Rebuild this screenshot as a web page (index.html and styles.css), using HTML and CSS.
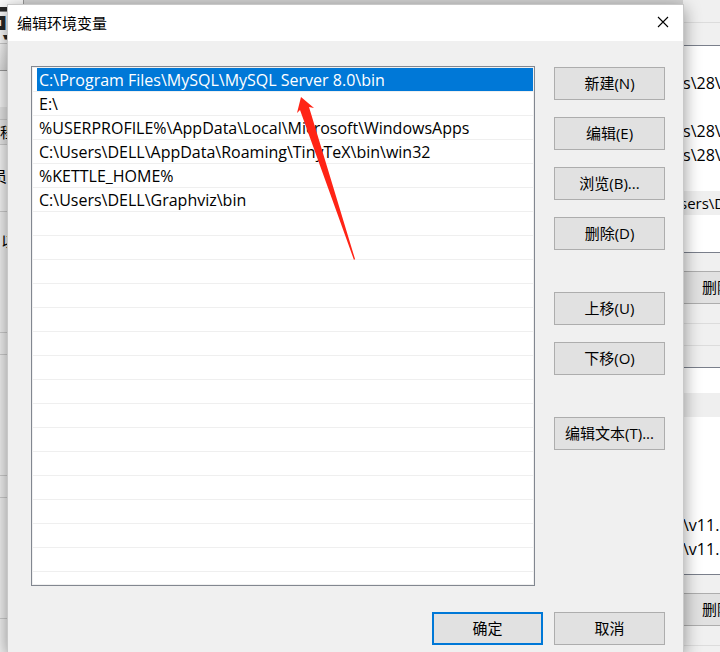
FILE: index.html
```html
<!DOCTYPE html>
<html lang="zh-CN">
<head>
<meta charset="utf-8">
<title>编辑环境变量</title>
<link rel="stylesheet" href="styles.css">
</head>
<body>
<div class="desktop">
  <div class="behind" aria-hidden="true">
    <div class="strip">
      <div class="block heading">可</div>
      <div class="block toolbar"></div>
      <div class="block space"></div>
      <div class="block tab">程</div>
      <div class="block member">员</div>
      <div class="block note">以</div>
      <div class="block short"></div>
      <div class="block tall"></div>
      <div class="block short"></div>
      <div class="block tall"></div>
    </div>
    <div class="caption"></div>
    <div class="parent">
      <div class="parent-title"></div>
      <div class="parent-gap"></div>
      <div class="vars">
        <div class="var"></div>
        <div class="var">s\28\</div>
        <div class="var"></div>
        <div class="var">s\28\</div>
        <div class="var">s\28\</div>
        <div class="var"></div>
        <div class="var current">sers\D</div>
      </div>
      <div class="parent-actions"><span class="parent-button">删除</span></div>
      <div class="group-edge"></div>
      <div class="parent-gap"></div>
      <div class="vars">
        <div class="var"></div>
        <div class="var current"></div>
        <div class="var"></div>
        <div class="var"></div>
        <div class="var"></div>
        <div class="var"></div>
        <div class="var">\v11.</div>
        <div class="var">\v11.</div>
      </div>
      <div class="parent-actions"><span class="parent-button">删除</span></div>
      <div class="group-edge"></div>
    </div>
  </div>

  <main class="dialog" role="dialog" aria-labelledby="dialog-title">
    <header class="titlebar">
      <h1 id="dialog-title">编辑环境变量</h1>
      <button class="close" type="button" aria-label="关闭">
        <svg width="12" height="12" viewBox="0 0 12 12"><path d="M1 1L11 11M11 1L1 11" fill="none" stroke="#000" stroke-width="1.1"/></svg>
      </button>
    </header>
    <div class="content">
      <div class="editor">
        <div class="list-wrap">
          <ul class="paths">
            <li class="selected">C:\Program Files\MySQL\MySQL Server 8.0\bin</li>
            <li>E:\</li>
            <li>%USERPROFILE%\AppData\Local\Microsoft\WindowsApps</li>
            <li>C:\Users\DELL\AppData\Roaming\TinyTeX\bin\win32</li>
            <li>%KETTLE_HOME%</li>
            <li>C:\Users\DELL\Graphviz\bin</li>
          </ul>
          <svg class="arrow" width="60" height="166" viewBox="0 0 60 166"><path d="M5 1L18 12L13 11L59 163L58 164L4 14L1 17Z" fill="#ff2416"/></svg>
        </div>
        <div class="actions">
          <button type="button">新建(N)</button>
          <button type="button">编辑(E)</button>
          <button type="button">浏览(B)...</button>
          <button type="button">删除(D)</button>
          <button type="button" class="group">上移(U)</button>
          <button type="button">下移(O)</button>
          <button type="button" class="group">编辑文本(T)...</button>
        </div>
      </div>
      <footer class="footer">
        <button type="button" class="default">确定</button>
        <button type="button">取消</button>
      </footer>
    </div>
  </main>
</div>
</body>
</html>
```
FILE: styles.css
```css
* {
  box-sizing: border-box;
}

body {
  margin: 0;
  font-family: "Open Sans", "Noto Sans CJK SC", sans-serif;
  font-size: 15px;
  color: #000;
}

.desktop {
  display: grid;
  height: 100vh;
  overflow: hidden;
}

.behind,
.dialog {
  grid-area: 1 / 1;
  min-width: 0;
}

/* Windows behind the dialog */
.behind {
  display: grid;
  grid-template-columns: 24px 1fr 37px;
  background: #f0f0f0;
  white-space: nowrap;
  overflow: hidden;
}

.strip {
  border-right: 1px solid #999;
}

.block {
  border-bottom: 1px solid #ccc;
  overflow: hidden;
}

.heading {
  height: 44px;
  font-size: 36px;
  font-weight: 700;
  line-height: 46px;
  text-indent: -15px;
  color: #282828;
  background: #fafafa;
}

.toolbar {
  height: 27px;
  border-color: #999;
  background: linear-gradient(#f5f5f5, #ddd);
}

.space {
  height: 49px;
  background: linear-gradient(#f4f4f4 36px, #e4e4e4 36px);
}

.tab {
  height: 25px;
  line-height: 24px;
  background: #e8e8e8;
}

.member {
  height: 67px;
  line-height: 62px;
  text-indent: -8px;
  background: #f4f4f4;
}

.note {
  height: 121px;
  line-height: 58px;
  text-indent: 1px;
}

.short {
  height: 22px;
}

.tall {
  height: 121px;
}

.caption {
  background: #d4d4d4;
}

.parent {
  overflow: hidden;
}

.parent-title {
  height: 23px;
  border-bottom: 1px solid #dcdcdc;
}

.parent-gap {
  height: 22px;
}

.vars {
  height: 208px;
  padding-top: 1px;
  border: solid #7a7f8b;
  border-width: 1px 0;
  background: #fff;
  font-size: 16px;
}

.var {
  height: 24px;
  line-height: 24px;
}

.current {
  background: #efefef;
  font-size: 15px;
  text-indent: -3px;
}

.parent-actions {
  height: 71px;
  padding-top: 18px;
  border-bottom: 1px solid #dcdcdc;
}

.parent-button {
  display: block;
  height: 33px;
  padding-left: 19px;
  line-height: 31px;
  border: solid #adadad;
  border-width: 1px 0;
  background: #e1e1e1;
}

.group-edge {
  height: 22px;
  border-bottom: 1px solid #dcdcdc;
}

.group-edge + .parent-gap {
  height: 21px;
}

/* Dialog */
.dialog {
  margin: 4px 36px 0 7px;
  border: 1px solid #c8c8c8;
  border-bottom: 0;
  background: #f0f0f0;
  box-shadow: 0 4px 16px rgba(0, 0, 0, 0.42);
  z-index: 1;
}

.titlebar {
  display: flex;
  align-items: center;
  justify-content: space-between;
  height: 36px;
  padding: 0 14px 0 9px;
  background: #fff;
}

h1 {
  margin: 0;
  font-size: 15px;
  font-weight: 400;
  line-height: 20px;
}

button {
  height: 33px;
  padding: 0 0 2px;
  border: 1px solid #adadad;
  border-radius: 0;
  background: #e1e1e1;
  font: inherit;
  color: inherit;
}

.close {
  display: flex;
  height: auto;
  padding: 0 0 2px;
  border: 0;
  background: none;
}

.content {
  padding: 25px 18px 0 23px;
}

.editor {
  display: flex;
  gap: 19px;
}

.list-wrap {
  position: relative;
  flex: 1;
  min-width: 0;
}

.paths {
  height: 520px;
  margin: 0;
  padding: 1px;
  border: 1px solid #828790;
  list-style: none;
  font-size: 16px;
  background: repeating-linear-gradient(#fff 0 23px, #efefef 23px 24px) content-box #fff;
}

.paths li {
  height: 23px;
  margin: 0 0 1px 4px;
  padding-left: 2px;
  line-height: 24px;
  white-space: nowrap;
}

.paths .selected {
  color: #fff;
  background: #0078d7;
}

.arrow {
  position: absolute;
  left: 265px;
  top: 30px;
}

.actions {
  display: flex;
  flex-direction: column;
  gap: 17px;
  width: 111px;
  padding-top: 1px;
}

.actions .group {
  margin-top: 25px;
}

.footer {
  display: flex;
  justify-content: flex-end;
  gap: 11px;
  padding-top: 26px;
}

.footer button {
  width: 111px;
}

.footer .default {
  border: 2px solid #0078d7;
}
```
